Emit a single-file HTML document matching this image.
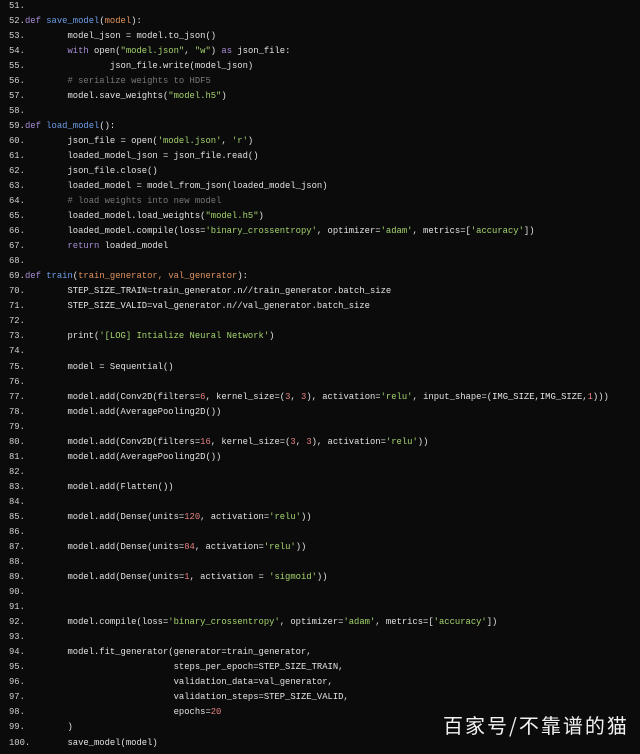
<!DOCTYPE html>
<html><head><meta charset="utf-8"><style>
body{margin:0;background:#0b0b0b;width:640px;height:754px;overflow:hidden;position:relative}
.l{position:absolute;left:0;height:15px;font-family:"Liberation Mono",monospace;font-size:8.85px;color:#e2e2e2;white-space:pre;line-height:15px}
.n{position:absolute;left:9px;color:#d0d0d0}
.c{position:absolute;left:25px}
.k{color:#a98fd8}.f{color:#6d9ee8}.p{color:#e0935e}.s{color:#a5d46e}.m{color:#777}.d{color:#e58080}
.w{position:absolute;left:443px;top:710px;font-family:"Noto Sans CJK SC",sans-serif;font-size:20px;color:#f2f2f2;letter-spacing:2px}
</style></head><body>
<div id="code"></div>
<script>
var L=[
"","<span class=k>def</span> <span class=f>save_model</span>(<span class=p>model</span>):",
"        model_json = model.to_json()",
"        <span class=k>with</span> open(<span class=s>\"model.json\"</span>, <span class=s>\"w\"</span>) <span class=k>as</span> json_file:",
"                json_file.write(model_json)",
"        <span class=m># serialize weights to HDF5</span>",
"        model.save_weights(<span class=s>\"model.h5\"</span>)",
"",
"<span class=k>def</span> <span class=f>load_model</span>():",
"        json_file = open(<span class=s>'model.json'</span>, <span class=s>'r'</span>)",
"        loaded_model_json = json_file.read()",
"        json_file.close()",
"        loaded_model = model_from_json(loaded_model_json)",
"        <span class=m># load weights into new model</span>",
"        loaded_model.load_weights(<span class=s>\"model.h5\"</span>)",
"        loaded_model.compile(loss=<span class=s>'binary_crossentropy'</span>, optimizer=<span class=s>'adam'</span>, metrics=[<span class=s>'accuracy'</span>])",
"        <span class=k>return</span> loaded_model",
"",
"<span class=k>def</span> <span class=f>train</span>(<span class=p>train_generator, val_generator</span>):",
"        STEP_SIZE_TRAIN=train_generator.n//train_generator.batch_size",
"        STEP_SIZE_VALID=val_generator.n//val_generator.batch_size",
"",
"        print(<span class=s>'[LOG] Intialize Neural Network'</span>)",
"",
"        model = Sequential()",
"",
"        model.add(Conv2D(filters=<span class=d>6</span>, kernel_size=(<span class=d>3</span>, <span class=d>3</span>), activation=<span class=s>'relu'</span>, input_shape=(IMG_SIZE,IMG_SIZE,<span class=d>1</span>)))",
"        model.add(AveragePooling2D())",
"",
"        model.add(Conv2D(filters=<span class=d>16</span>, kernel_size=(<span class=d>3</span>, <span class=d>3</span>), activation=<span class=s>'relu'</span>))",
"        model.add(AveragePooling2D())",
"",
"        model.add(Flatten())",
"",
"        model.add(Dense(units=<span class=d>120</span>, activation=<span class=s>'relu'</span>))",
"",
"        model.add(Dense(units=<span class=d>84</span>, activation=<span class=s>'relu'</span>))",
"",
"        model.add(Dense(units=<span class=d>1</span>, activation = <span class=s>'sigmoid'</span>))",
"","",
"        model.compile(loss=<span class=s>'binary_crossentropy'</span>, optimizer=<span class=s>'adam'</span>, metrics=[<span class=s>'accuracy'</span>])",
"",
"        model.fit_generator(generator=train_generator,",
"                            steps_per_epoch=STEP_SIZE_TRAIN,",
"                            validation_data=val_generator,",
"                            validation_steps=STEP_SIZE_VALID,",
"                            epochs=<span class=d>20</span>",
"        )",
"        save_model(model)"];
var h="";
for(var i=0;i<L.length;i++){h+='<div class=l style="top:'+(i*15.04-1.5).toFixed(1)+'px"><span class=n>'+(51+i)+'.</span><span class=c>'+L[i]+'</span></div>';}
document.getElementById("code").innerHTML=h;
</script>
<div class="w">百家号/不靠谱的猫</div>
</body></html>
